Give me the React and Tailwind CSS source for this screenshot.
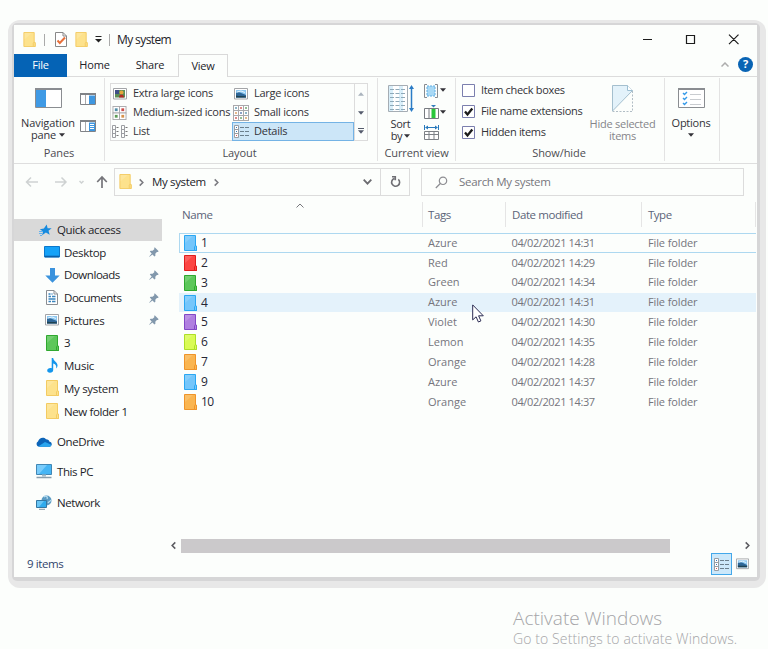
import React from "react";

const palette = {
  yellow: ["#fde28c", "#f3cb62"],
  azure: ["#74c6fb", "#2ba7f2"],
  red: ["#fc4643", "#df1d1d"],
  green: ["#5cc75a", "#2fa82f"],
  violet: ["#b07fe0", "#8248c6"],
  lemon: ["#d9fb54", "#aede28"],
  orange: ["#fab550", "#ef942a"],
};

function Folder({ color = "yellow", className = "h-4 w-[13px]" }) {
  const [fill, edge] = palette[color];
  return (
    <svg viewBox="0 0 13 16" className={"shrink-0 " + className}>
      <path d="M.5.5h11v10.6h1v4.4H.5z" fill={fill} stroke={edge} />
      <path d="M1 8 9 1H1z" fill="#fff" opacity=".14" />
      <path d="M10.5 15.5v-3.6l1-1.2 1 1v3.8z" fill={fill} stroke={edge} />
    </svg>
  );
}

function Caret({ className = "" }) {
  return (
    <svg viewBox="0 0 6 4" className={"h-[4px] w-[6px] shrink-0 " + className}>
      <path d="M0 .3h6L3 3.7z" fill="currentColor" />
    </svg>
  );
}

function Chevron({ className = "" }) {
  return (
    <svg viewBox="0 0 10 10" className={"shrink-0 " + className} fill="none" stroke="currentColor" strokeWidth="1.7">
      <path d="m3 1.5 3.5 3.5L3 8.5" />
    </svg>
  );
}

function PictureIcon({ people, className = "h-3 w-[14px]" }) {
  return (
    <svg viewBox="0 0 14 12" className={"shrink-0 " + className}>
      <path d="M.5.5h13v10.5H.5z" fill="#fff" stroke="#a3a5a8" />
      <path d="M2 2h10v7.5H2z" fill={people ? "#5d8f55" : "#8cc8f0"} />
      {people ? (
        <>
          <path d="M2 2h4v4H2z" fill="#3d4f86" />
          <circle cx="8.5" cy="4.5" r="2" fill="#e5a53a" />
          <path d="M6 9.5c0-4 5-4 5 0z" fill="#b32a25" />
        </>
      ) : (
        <>
          <path d="M2 5c3-2 5 0 10 2v2.5H2z" fill="#2e6798" />
          <path d="M2 7.5c3 1 7 0 10 1v1H2z" fill="#1f4250" />
          <path d="m3 4 4-1 4 1.5" stroke="#e9f6ff" fill="none" />
        </>
      )}
    </svg>
  );
}

function TilesIcon({ small }) {
  const n = small ? 3 : 2;
  const s = small ? 5 : 7;
  const dot = small ? 1.6 : 3;
  const colors = ["#518fa8", "#cc4d49", "#5b9b57", "#d7924a", "#4b6fa8"];
  const cells = [];
  for (let i = 0; i < n * n; i++) cells.push([i % n, Math.floor(i / n)]);
  return (
    <svg viewBox={small ? "0 0 16 16" : "0 0 15 15"} className={small ? "size-[16px] shrink-0" : "h-[14px] w-[15px] shrink-0"}>
      {cells.map(([x, y], i) => (
        <g key={i}>
          <rect x={x * s + 0.5} y={y * s + 0.5} width={s} height={s} fill="#fff" stroke="#a9a9ac" />
          <rect x={x * s + 0.5 + (s - dot) / 2} y={y * s + 0.5 + (s - dot) / 2} width={dot} height={dot} fill={colors[i % 5]} />
        </g>
      ))}
    </svg>
  );
}

function ListIcon() {
  return (
    <svg viewBox="0 0 16 13" className="h-[13px] w-[16px] shrink-0" fill="none" stroke="#9c9ea2">
      {[0.5, 9.5].map((x) => (
        <g key={x}>
          <path d={`M${x} .5h3v12h-3zM${x} 4.5h3M${x} 8.5h3`} />
          <path d={`M${x + 4} 2.5h2M${x + 4} 6.5h2M${x + 4} 10.5h2`} stroke="#777" />
        </g>
      ))}
    </svg>
  );
}

function DetailsIcon() {
  return (
    <svg viewBox="0 0 16 13" className="h-[13px] w-[16px] shrink-0" fill="none">
      <path d="M.5.5h4v12h-4zM.5 4.5h4M.5 8.5h4" stroke="#999da3" fill="#fff" />
      <path d="M2 2h1v1H2zM2 6h1v1H2z" fill="#3579b7" />
      <path d="M2 10h1v1H2z" fill="#dd5550" />
      <path d="M6 2.5h4m1 0h4M6 6.5h4m1 0h4M6 10.5h4m1 0h4" stroke="#6b7f8d" />
    </svg>
  );
}

function PaneIcon({ lines }) {
  return (
    <svg viewBox="0 0 16 12" className="h-3 w-4 shrink-0">
      <path d="M.5.5h15v11H.5z" fill="#fff" stroke="#808387" />
      <path d="M0 0h16v2H0z" fill="#808387" />
      <path d="M5.5 2v9" stroke="#a9abad" />
      <path d="M9 2.5h6v8.5H9z" fill="#3e97e0" />
      {lines && <path d="M10 4.5h4M10 6.5h4M10 8.5h4" stroke="#fff" />}
    </svg>
  );
}

function Pin() {
  return (
    <svg viewBox="0 0 10 10" className="size-[10px]" fill="#8298ac">
      <path d="m5.7.3 4 4-1 .8-.8-.2-1.6 1.8.1 2-1 .8L3.5 7.4.6 9.8.2 9.4l2.5-2.9L.8 4.6l.8-.9 2 .1 1.9-1.7-.4-.9z" />
    </svg>
  );
}

function SideIcon({ kind }) {
  if (kind === "star")
    return (
      <svg viewBox="0 0 13 13" className="size-[13px]">
        <path d="m7.7.5.9 3.7 4.1.1-3.2 2.5 1.2 4-3.8-2.3L3 11.3l1.1-3.7L.8 5.2l4.1-.6z" fill="#168ade" />
        <path d="M0 7.5h4M0 9.5h3M1 11.5h2" stroke="#62b2ef" />
      </svg>
    );
  if (kind === "desktop")
    return (
      <svg viewBox="0 0 16 12" className="h-3 w-4">
        <path d="M.5.5h15v10.5H.5z" fill="#14a2f8" stroke="#0a78cc" />
        <path d="M1 10.5h14" stroke="#0a5fa8" strokeWidth="1.6" />
      </svg>
    );
  if (kind === "down")
    return (
      <svg viewBox="0 0 15 15" className="size-[15px]">
        <path d="M5 0h5v7.5h4.7L7.5 14.8.3 7.5H5z" fill="#3b93dd" />
      </svg>
    );
  if (kind === "doc")
    return (
      <svg viewBox="0 0 12 15" className="h-[15px] w-3" fill="none">
        <path d="M.5.5h7.5l3.5 3.5v10.5H.5z" fill="#fff" stroke="#8b8e92" />
        <path d="M8 .5V4h3.5" stroke="#8b8e92" />
        <path d="M2.5 4h2m1 0h1M2.5 6.5H5m1 0h3.5m-7 2.5h7m-7 2.5H5m1 0h3.5" stroke="#3a85bd" strokeWidth="1.3" />
      </svg>
    );
  if (kind === "pic") return <PictureIcon className="h-[12px] w-[16px]" />;
  if (kind === "music")
    return (
      <svg viewBox="0 0 11 15" className="h-[15px] w-[11px]">
        <path d="M4.7 0h1.5c.2 3 4 4 4.3 7 .1 1.500-.4 2.500-1.300 3.500.6-3-1-4.500-3-5V12c0 1.800-1.400 2.800-3.200 2.800S.2 13.900.2 12.600c0-1.700 2.200-3 4.500-2.300z" fill="#1496ec" />
      </svg>
    );
  if (kind === "cloud")
    return (
      <svg viewBox="0 0 16 10" className="h-[10px] w-4">
        <path d="M3.500 9.700C.5 9.700-.5 6 2 4.500 3 1 7.500-.5 10 2.300c2 0 3.300 1.200 3.500 2.500 3 .3 3 4.700 0 4.900z" fill="#0c64b8" />
        <path d="M2.500 9.200 9 5l6.300 2.800c-.3 1.200-1 1.900-2.200 1.900H4z" fill="#29a5ee" />
      </svg>
    );
  if (kind === "pc")
    return (
      <svg viewBox="0 0 16 15" className="h-[15px] w-4">
        <path d="M.5.5h15v10H.5z" fill="#46b5f4" stroke="#4187b4" />
        <path d="m1 1h10L3 10H1z" fill="#9bdcff" opacity=".6" />
        <path d="M6 10.500h4v2H6z" fill="#a2bcca" />
        <path d="M.5 13.500h15" stroke="#8b9fac" strokeWidth="1.5" />
      </svg>
    );
  if (kind === "net")
    return (
      <svg viewBox="0 0 16 15" className="h-[15px] w-4">
        <circle cx="10.500" cy="5.500" r="5" fill="#5a9bc3" />
        <path d="M8 2c2-2 4 0 3 2M12 8c1-2 2-1 3-3" stroke="#b9def1" fill="none" strokeWidth="1.200" />
        <path d="M.5 5.500h10v7H.5z" fill="#2fabed" stroke="#3277a3" />
        <path d="M1 6h7l-5 6H1z" fill="#8fd8fb" opacity=".6" />
        <path d="M3 14.300h6" stroke="#8197a3" />
      </svg>
    );
  return <Folder color={kind} />;
}

const sideItems = [
  ["desktop", "Desktop", true, "tracking-[-0.35px]"],
  ["down", "Downloads", true, "tracking-[-0.45px]"],
  ["doc", "Documents", true, "tracking-[-0.45px]"],
  ["pic", "Pictures", true, "tracking-[-0.35px]"],
  ["green", "3", false, ""],
  ["music", "Music", false, "tracking-[-0.25px]"],
  ["yellow", "My system", false, "tracking-[-0.3px]"],
  ["yellow", "New folder 1", false, "tracking-[-0.4px]"],
];

const rows = [
  ["azure", "1", "Azure", "04/02/2021 14:31"],
  ["red", "2", "Red", "04/02/2021 14:29"],
  ["green", "3", "Green", "04/02/2021 14:34"],
  ["azure", "4", "Azure", "04/02/2021 14:31"],
  ["violet", "5", "Violet", "04/02/2021 14:30"],
  ["lemon", "6", "Lemon", "04/02/2021 14:35"],
  ["orange", "7", "Orange", "04/02/2021 14:28"],
  ["azure", "9", "Azure", "04/02/2021 14:37"],
  ["orange", "10", "Orange", "04/02/2021 14:37"],
];

function TitleBar() {
  return (
    <div className="flex h-[29px] items-center pl-[9px]">
      <Folder className="h-[15px] w-[13px]" />
      <span className="ml-[8px] h-[12px] w-px bg-[#aaa]" />
      <svg viewBox="0 0 12 15" className="ml-[10px] h-[15px] w-3" fill="none">
        <path d="M.5.500h7.500l3.500 3.500v10.500H.5z" fill="#fff" stroke="#888" />
        <path d="M8 .5V4h3.500" stroke="#888" />
        <path d="m2.500 8.500 2.300 2.500L10 5.500" stroke="#e8703a" strokeWidth="2" />
      </svg>
      <Folder className="ml-[8px] h-[15px] w-[13px]" />
      <svg viewBox="0 0 7 7" className="ml-[7px] size-[7px]">
        <path d="M.5.500h6" stroke="#222" />
        <path d="M0 3h7L3.500 6.500z" fill="#222" />
      </svg>
      <span className="ml-[7px] h-[12px] w-px bg-[#aaa]" />
      <span className="ml-[7px] w-[100px] text-[12px] tracking-[-0.6px]">My system</span>
      <svg viewBox="0 0 98 12" className="mr-[17px] ml-auto h-3 w-[98px]" fill="none" stroke="#1c1c1c" strokeWidth="1.200">
        <path d="M1 5.500h9M44.500 1.500h8v8h-8zM87 .7l9.500 9.500m0-9.500-9.500 9.500" />
      </svg>
    </div>
  );
}

function Tabs() {
  return (
    <div className="flex h-[23px] text-[11px] tracking-[-0.2px]">
      <div className="flex w-[53px] items-center justify-center bg-[#0563b5] text-white">File</div>
      <div className="flex w-[55px] items-center justify-center border-b border-[#dcdcdc]">Home</div>
      <div className="flex w-[56px] items-center justify-center border-b border-[#dcdcdc]">Share</div>
      <div className="flex w-[50px] items-center justify-center border border-b-0 border-[#d9d9d9]">View</div>
      <div className="flex flex-1 items-center justify-end border-b border-[#dcdcdc] pr-[4px] pb-px">
        <svg viewBox="0 0 8 5" className="mr-[9px] h-[5px] w-2" fill="none" stroke="#adadad" strokeWidth="1.500">
          <path d="M.5 4.500 4 1l3.500 3.500" />
        </svg>
        <span className="flex size-[15px] items-center justify-center rounded-full bg-[#0964b4] text-[11px] font-bold text-white">?</span>
      </div>
    </div>
  );
}

function GalleryItem({ icon, children, active, className }) {
  return (
    <div className={"flex h-[19px] items-center whitespace-nowrap " + className + (active ? " border border-[#74b3e5] bg-[#cce6f8]" : "")}>
      <span className="flex w-[20px] shrink-0 items-center">{icon}</span>
      <span>{children}</span>
    </div>
  );
}

function Group({ label, className, labelClass = "", children }) {
  return (
    <div className={"flex h-[83px] flex-col border-r border-[#e3e3e3] " + className}>
      <div className="flex h-[67px]">{children}</div>
      <div className={"text-center leading-[16px] tracking-[-0.1px] text-[#4c4c52] " + labelClass}>{label}</div>
    </div>
  );
}

function CheckRow({ checked, children }) {
  return (
    <div className="flex h-[21px] items-center whitespace-nowrap">
      <svg viewBox="0 0 13 13" className="mr-[6px] size-[13px] shrink-0" fill="none">
        <path d="M.5.500h12v12H.5z" fill="#fff" stroke="#7b7fae" />
        {checked && <path d="m3 6.500 2.500 3L10.300 3.500" stroke="#1b1b1b" strokeWidth="2.300" />}
      </svg>
      {children}
    </div>
  );
}

function Ribbon() {
  return (
    <div className="flex h-[87px] border-b border-[#dedede] pt-[1px] text-[11px] tracking-[-0.25px] text-[#333238]">
      <Group label="Panes" className="w-[91px]">
        <div className="flex w-[68px] shrink-0 flex-col items-center pt-[10px]">
          <svg viewBox="0 0 27 20" className="h-5 w-[27px]">
            <path d="M.5.500h26v19H.5z" fill="#fff" stroke="#8a8d91" />
            <path d="M0 0h27v2H0z" fill="#8a8d91" />
            <path d="M1 2h10v17H1z" fill="#3f9ae5" />
          </svg>
          <span className="mt-[9px] leading-[12px] tracking-[-0.1px]">Navigation</span>
          <span className="flex items-center gap-[3px] leading-[12px]">pane <Caret /></span>
        </div>
        <div className="-ml-[2px] flex flex-col gap-[15px] pt-[15px]">
          <PaneIcon />
          <PaneIcon lines />
        </div>
      </Group>
      <Group label="Layout" className="w-[273px] pl-[5px]" labelClass="pr-[8px]">
        <div className="mt-[5px] flex h-[58px] w-[258px] border border-[#dcdcdc]">
          <div className="w-[121px]">
            <GalleryItem className="pl-[2px]" icon={<PictureIcon people />}>Extra large icons</GalleryItem>
            <GalleryItem className="pl-px" icon={<TilesIcon />}><span className="pl-px">Medium-sized icons</span></GalleryItem>
            <GalleryItem className="pl-px" icon={<ListIcon />}><span className="pl-px">List</span></GalleryItem>
          </div>
          <div className="w-[122px]">
            <GalleryItem className="pl-[2px]" icon={<PictureIcon />}>Large icons</GalleryItem>
            <GalleryItem className="pl-px" icon={<TilesIcon small />}><span className="pl-px">Small icons</span></GalleryItem>
            <GalleryItem className="pl-px" active icon={<DetailsIcon />}>Details</GalleryItem>
          </div>
          <div className="flex flex-1 flex-col items-center border-l border-[#dcdcdc] text-[#555b6c]">
            <span className="flex h-[19px] items-center"><Caret className="rotate-180 text-[#aab3bd]" /></span>
            <span className="flex h-[19px] items-center"><Caret /></span>
            <span className="flex h-[18px] flex-col items-center justify-center gap-px"><span className="h-px w-[6px] bg-[#555b6c]" /><Caret /></span>
          </div>
        </div>
      </Group>
      <Group label="Current view" className="w-[78px]">
        <div className="flex w-[45px] flex-col items-center pt-[7px]">
          <svg viewBox="0 0 27 27" className="ml-[2px] h-[27px] w-[27px]">
            <path d="M.5.500h19v26H.5z" fill="#fff" stroke="#a5adb4" />
            <path d="M1 1h4v25H1zM11 1h4v25h-4z" fill="#d9effa" />
            <path d="M2 4.500h16M2 8.500h16M2 12.500h16M2 16.500h16M2 20.500h16M2 24.500h16" stroke="#8fa9b8" strokeDasharray="4 1.500" />
            <path d="M23.500 3v21" stroke="#2b7cc6" strokeWidth="1.500" />
            <path d="m21 4 2.500-4L26 4zM21 23l2.500 4 2.500-4z" fill="#2b7cc6" />
          </svg>
          <span className="mt-[6px] leading-[12px]">Sort</span>
          <span className="flex items-center gap-[2px] leading-[12px]">by <Caret /></span>
        </div>
        <div className="flex w-[24px] flex-col gap-[7px] pt-[6px] pl-px">
          <div className="flex items-center gap-[2px]">
            <svg viewBox="0 0 14 14" className="size-[14px] shrink-0">
              <path d="M3 2h8v10H3z" fill="#a8d9f5" stroke="#60aee3" strokeDasharray="2 1" />
              <path d="M3 .5H.5v13H3M11 .5h2.500v13H11" fill="none" stroke="#878b90" />
            </svg>
            <Caret className="mb-[2px]" />
          </div>
          <div className="flex items-center gap-px">
            <svg viewBox="0 0 15 14" className="h-[14px] w-[15px] shrink-0">
              <path d="M.5 3.500h14v10H.5zM5 3.500v10M10 3.500v10" fill="#fff" stroke="#777b80" />
              <path d="M7.500 4h4v9h-4z" fill="#29c73a" />
              <path d="M7 0h5L9.500 2.500z" fill="#347fbc" />
            </svg>
            <Caret />
          </div>
          <svg viewBox="0 0 15 15" className="-mt-px size-[15px] shrink-0">
            <path d="M.5 0v5M14.500 0v5M2 2.500h11" stroke="#2879bc" />
            <path d="m1 2.500 3-2v4zM14 2.500l-3-2v4z" fill="#2879bc" />
            <path d="M.5 6.500h14v8H.5zM.5 9.500h14M5 6.500v8M10 6.500v8" fill="#fff" stroke="#7d8186" />
          </svg>
        </div>
      </Group>
      <Group label="Show/hide" className="w-[209px]" labelClass="pr-[2px]">
        <div className="w-[125px] shrink-0 pt-[2px] pl-[6px] tracking-[-0.32px]">
          <CheckRow>Item check boxes</CheckRow>
          <CheckRow checked>File name extensions</CheckRow>
          <CheckRow checked>Hidden items</CheckRow>
        </div>
        <div className="flex w-[84px] flex-col items-center pt-[7px] text-[#85858a]">
          <svg viewBox="0 0 21 27" className="h-[27px] w-[21px]" fill="none">
            <path d="M.5 26V.500h15l5 5z" fill="#e3f2fa" />
            <path d="M.5 26V.500h15l5 5L.5 26" stroke="#a4bfce" />
            <path d="M15.500.5v5h5" fill="#fff" stroke="#9cbfd2" />
            <path d="M20.500 6v20.500H.5" stroke="#b1bdc5" strokeDasharray="2 1.500" />
          </svg>
          <span className="mt-[6px] leading-[12px] whitespace-nowrap">Hide selected</span>
          <span className="leading-[12px]">items</span>
        </div>
      </Group>
      <Group label="" className="w-[55px]">
        <div className="flex w-[52px] flex-col items-center pt-[10px]">
          <svg viewBox="0 0 27 20" className="h-5 w-[27px]" fill="none">
            <path d="M.5.500h26v19H.5z" fill="#fff" stroke="#8a8d91" />
            <path d="M0 0h27v2H0z" fill="#8a8d91" />
            <path d="m5 5 1.500 1.500L9 4M5 10l1.500 1.500L9 9m-4 6 1.500 1.500L9 14" stroke="#359ae8" strokeWidth="1.400" />
            <path d="M12 6.500h11M12 11.500h11M12 16.500h11" stroke="#c9ccd0" />
          </svg>
          <span className="mt-[9px] leading-[12px]">Options</span>
          <Caret className="mt-[4px]" />
        </div>
      </Group>
    </div>
  );
}

function NavBar() {
  return (
    <div className="flex h-[38px] items-start pt-[4px] text-[11.5px]">
      <svg viewBox="0 0 100 28" className="h-7 w-[100px] shrink-0" fill="none" strokeWidth="1.500">
        <path d="M24 14H13m4-4.500L12.500 14l4.500 4.500M41 14h10.500m-4-4.500 4.500 4.500-4.500 4.500m18-5.500 2 2 2-2" stroke="#ced2d2" />
        <path d="M88 20V9m-4.800 5L88 9l4.800 5" stroke="#75757a" strokeWidth="1.700" />
      </svg>
      <div className="flex h-[28px] w-[296px] shrink-0 items-center border border-[#dcdcdc]">
        <div className="flex h-full w-[265px] items-center pl-[4px]">
          <Folder className="mb-px h-[15px] w-[13px]" />
          <Chevron className="ml-[5px] size-[9px] text-[#7b7b80]" />
          <span className="ml-[6px] w-[55px] tracking-[-0.35px] whitespace-nowrap">My system</span>
          <Chevron className="ml-[5px] size-[9px] text-[#7b7b80]" />
          <svg viewBox="0 0 9 6" className="mr-[8px] ml-auto h-[6px] w-[9px]" fill="none" stroke="#6b6b70" strokeWidth="1.800">
            <path d="m.7.700 3.800 4 3.800-4" />
          </svg>
        </div>
        <div className="flex h-full flex-1 items-center justify-center border-l border-[#dcdcdc]">
          <svg viewBox="0 0 11 12" className="h-3 w-[11px]" fill="none" stroke="#6f6f74" strokeWidth="1.600">
            <path d="M8.300 3.300a4 4 0 1 1-4-.8M2 .8h3.300v3.400" />
          </svg>
        </div>
      </div>
      <div className="ml-[11px] flex h-[28px] w-[323px] items-center border border-[#dcdcdc] pl-[13px] tracking-[-0.3px] text-[#77777c]">
        <svg viewBox="0 0 13 13" className="mr-[11px] size-[13px]" fill="none" stroke="#8d8d92" strokeWidth="1.200">
          <circle cx="8" cy="4.800" r="3.700" />
          <path d="M5.300 7.500.8 12" />
        </svg>
        Search My system
      </div>
    </div>
  );
}

function Sidebar() {
  return (
    <div className="w-[148px] shrink-0 pt-[17px] text-[11.5px] text-[#1d1d28]">
      <div className="flex h-[22px] items-center bg-[#d9d9d9] pl-[25px]">
        <SideIcon kind="star" />
        <span className="ml-[5px] tracking-[-0.4px]">Quick access</span>
      </div>
      {sideItems.map(([icon, label, pinned, track], i) => (
        <div key={i} className="flex h-[22.7px] items-center pr-[3px] pl-[29px]">
          <span className="flex w-[18px] shrink-0 justify-center"><SideIcon kind={icon} /></span>
          <span className={"ml-[3px] flex-1 whitespace-nowrap " + track}>{label}</span>
          {pinned && <Pin />}
        </div>
      ))}
      <div className="mt-[4px]">
        {[["cloud", "OneDrive"], ["pc", "This PC"], ["net", "Network"]].map(([icon, label]) => (
          <div key={label} className="flex h-[30.3px] items-center pl-[22px]">
            <SideIcon kind={icon} />
            <span className="ml-[5px] tracking-[-0.4px]">{label}</span>
          </div>
        ))}
      </div>
    </div>
  );
}

function FileList() {
  return (
    <div className="relative flex min-w-0 flex-1 flex-col text-[11.5px]">
      <div className="flex h-[31px] items-start pl-[17px] text-[#5b6478]">
        <div className="flex h-[25px] w-[244px] items-center border-r border-[#e5e5e5] pl-[3px] tracking-[-0.4px]">
          Name
          <svg viewBox="0 0 8 5" className="mb-[18px] ml-[83px] h-[5px] w-2" fill="none" stroke="#77777c">
            <path d="M.5 4.500 4 1l3.500 3.500" />
          </svg>
        </div>
        <div className="flex h-[25px] w-[83px] items-center border-r border-[#e5e5e5] pl-[5px] tracking-[-0.4px]">Tags</div>
        <div className="flex h-[25px] w-[136px] items-center border-r border-[#e5e5e5] pl-[6px] tracking-[-0.42px]">Date modified</div>
        <div className="flex h-[25px] w-[114px] items-center border-r border-[#e5e5e5] pl-[6px] tracking-[-0.5px]">Type</div>
      </div>
      {rows.map(([color, name, tag, date], i) => (
        <div
          key={name}
          className={
            "mr-px ml-[17px] flex h-[19.87px] shrink-0 items-center text-[11px] text-[#75757c] " +
            (i === 0 ? "border border-r-0 border-[#add8f0]" : "border border-transparent") +
            (i === 3 ? " bg-[#e4f2fb]" : "")
          }
        >
          <span className="flex w-[248px] items-center pl-[4px] text-[12px] tracking-[-0.5px] text-[#262635]">
            <Folder color={color} />
            <span className="ml-[4px]">{name}</span>
          </span>
          <span className="w-[83.5px]">{tag}</span>
          <span className="w-[136.5px] tracking-[-0.38px] whitespace-nowrap">{date}</span>
          <span className="tracking-[-0.12px] whitespace-nowrap">File folder</span>
        </div>
      ))}
      <svg viewBox="0 0 12 19" className="absolute top-[102px] left-[310px] h-[19px] w-3">
        <path d="M.7.900v15l3.400-3.100 2.300 5.200 2.500-1.100-2.300-5.100h4.700z" fill="#fff" stroke="#2c2c53" />
      </svg>
      <div className="mt-auto flex h-[15px] items-center pr-[5px] pl-[7px] text-[#5b5b60]">
        <Chevron className="size-[9px] rotate-180" />
        <div className="ml-[3px] h-[14px] w-[489px] bg-[#cbc9cb]" />
        <Chevron className="ml-auto size-[9px]" />
      </div>
    </div>
  );
}

export default function App() {
  return (
    <div className="flex h-[649px] w-[768px] flex-col overflow-hidden bg-[#fcfefc] pt-[20px] pl-[8px] font-['Open_Sans','Noto_Sans',sans-serif] text-[#222228]">
      <div className="h-[568px] w-[758px] shrink-0 rounded-[12px] bg-[#e8e8e8] pt-[3px] pl-[4px]">
        <div className="h-[558px] w-[748px] rounded-[5px] bg-[#d6d6d7] pt-[2px] pl-[2px]">
          <div className="flex h-[552px] w-[743px] flex-col bg-[#fcfefc]">
            <TitleBar />
            <Tabs />
            <Ribbon />
            <NavBar />
            <div className="flex min-h-0 flex-1">
              <Sidebar />
              <FileList />
            </div>
            <div className="flex h-[24px] items-center pr-[8px] pb-[2px] pl-[13px] text-[11.5px] tracking-[-0.4px] text-[#30456c]">
              9 items
              <span className="ml-auto flex h-[22px] w-[21px] items-center justify-center border border-[#43a8ea] bg-[#cce8fa]"><DetailsIcon /></span>
              <PictureIcon className="ml-[4px] h-[12px] w-[13px]" />
            </div>
          </div>
        </div>
      </div>
      <div className="ml-[505px] pt-[18px] font-light whitespace-nowrap text-[#a5a5a8]">
        <div className="text-[19px] leading-[24px]">Activate Windows</div>
        <div className="text-[14px] leading-[18px] tracking-[0.1px]">Go to Settings to activate Windows.</div>
      </div>
    </div>
  );
}
